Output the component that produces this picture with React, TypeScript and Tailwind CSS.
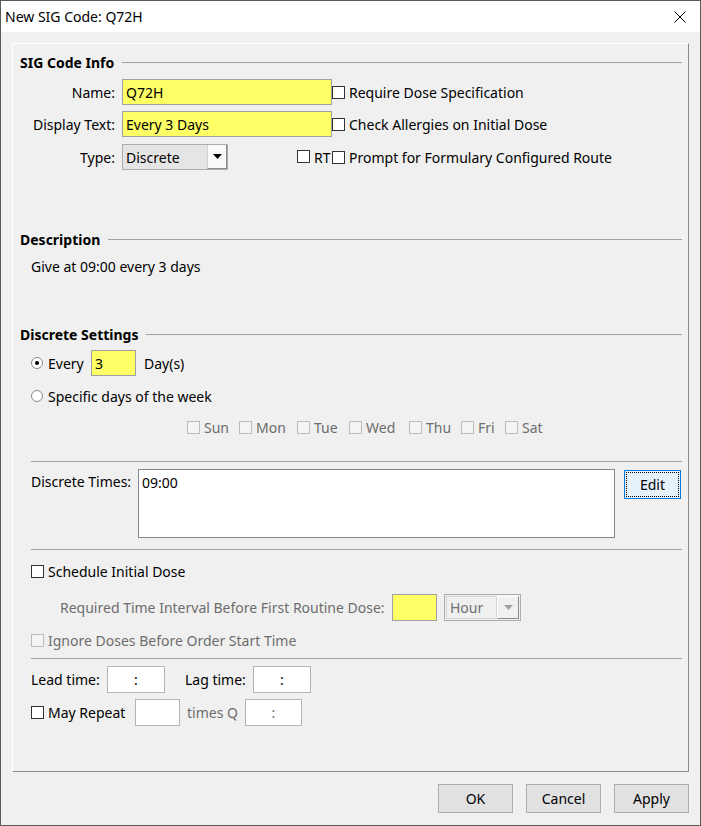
import React from "react";

function Box({ disabled }: { disabled?: boolean }) {
  return (
    <span
      className={
        disabled
          ? "inline-block w-[13px] h-[13px] shrink-0 border border-[#bcbcbc] bg-[#f4f4f4]"
          : "inline-block w-[13px] h-[13px] shrink-0 border border-[#333333] bg-white"
      }
    />
  );
}

function Radio({ checked }: { checked?: boolean }) {
  return (
    <span className="flex w-[12px] h-[12px] shrink-0 items-center justify-center rounded-full border border-[#8a8a8a] bg-white">
      {checked && <span className="block w-[4px] h-[4px] rounded-full bg-black" />}
    </span>
  );
}

function Heading({ title, className }: { title: string; className: string }) {
  return (
    <div className={"flex h-[20px] items-center " + className}>
      <span className="font-bold whitespace-nowrap">{title}</span>
      <div className="ml-[8px] h-px flex-1 bg-[#a0a0a0]" />
    </div>
  );
}

function Sep({ className }: { className: string }) {
  return <div className={"ml-[11px] h-px bg-[#a0a0a0] " + className} />;
}

function Arrow({ color }: { color: string }) {
  return (
    <svg width="9" height="5" viewBox="0 0 9 5">
      <path d="M0 0 H9 L4.5 5 Z" fill={color} />
    </svg>
  );
}

const days = [
  { d: "Sun", w: "w-[52px]" },
  { d: "Mon", w: "w-[58px]" },
  { d: "Tue", w: "w-[52px]" },
  { d: "Wed", w: "w-[60px]" },
  { d: "Thu", w: "w-[52px]" },
  { d: "Fri", w: "w-[44px]" },
  { d: "Sat", w: "w-[44px]" },
];

export default function App() {
  return (
    <div className="w-[701px] h-[826px] border border-[#5a5a5a] bg-[#f0f0f0] font-['Noto_Sans',sans-serif] text-[14px] text-black flex flex-col overflow-hidden">
      {/* title bar */}
      <div className="h-[31px] bg-white flex items-center justify-between pl-[4px] pr-[14px] shrink-0">
        <span className="text-[14px]">New SIG Code: Q72H</span>
        <svg width="12" height="12" viewBox="0 0 12 12">
          <path d="M0.5 0.5 L11.5 11.5 M11.5 0.5 L0.5 11.5" stroke="#000" strokeWidth="1" />
        </svg>
      </div>

      {/* panel */}
      <div className="ml-[11px] mt-[11px] w-[677px] h-[729px] border border-t-white border-l-white border-r-[#8c8c8c] border-b-[#8c8c8c] pl-[7px] pr-[6px] flex flex-col shrink-0">
        <Heading title="SIG Code Info" className="mt-[8px]" />

        {/* row 1 */}
        <div className="mt-[7px] h-[26px] flex items-center">
          <span className="w-[95px] text-right">Name:</span>
          <div className="ml-[7px] w-[210px] h-[26px] bg-[#ffff66] border border-[#a0a0a0] flex items-center pl-[3px]">Q72H</div>
          <Box />
          <span className="ml-[4px]">Require Dose Specification</span>
        </div>
        {/* row 2 */}
        <div className="mt-[6px] h-[26px] flex items-center">
          <span className="w-[95px] text-right">Display Text:</span>
          <div className="ml-[7px] w-[210px] h-[26px] bg-[#ffff66] border border-[#a0a0a0] flex items-center pl-[3px]">Every 3 Days</div>
          <Box />
          <span className="ml-[4px]">Check Allergies on Initial Dose</span>
        </div>
        {/* row 3 */}
        <div className="mt-[7px] h-[26px] flex items-center">
          <span className="w-[95px] text-right">Type:</span>
          <div className="ml-[7px] w-[106px] h-[26px] bg-[#e5e5e5] border border-[#adadad] flex items-stretch">
            <span className="flex-1 flex items-center pl-[3px]">Discrete</span>
            <span className="w-[20px] bg-[#fafafa] border-r border-b border-[#8a8a8a] border-l border-l-[#d0d0d0] flex items-center justify-center">
              <Arrow color="#000" />
            </span>
          </div>
          <span className="ml-[69px]"><Box /></span>
          <span className="ml-[4px] w-[18px] flex items-center">RT</span>
          <Box />
          <span className="ml-[4px]">Prompt for Formulary Configured Route</span>
        </div>

        <Heading title="Description" className="mt-[59px]" />
        <div className="mt-[7px] h-[20px] flex items-center ml-[11px]">Give at 09:00 every 3 days</div>

        <Heading title="Discrete Settings" className="mt-[48px]" />
        <div className="mt-[6px] h-[26px] flex items-center ml-[11px]">
          <Radio checked />
          <span className="ml-[5px] w-[43px]">Every</span>
          <div className="w-[45px] h-[26px] bg-[#ffff66] border border-[#a0a0a0] flex items-center pl-[3px]">3</div>
          <span className="ml-[8px]">Day(s)</span>
        </div>
        <div className="mt-[10px] h-[20px] flex items-center ml-[11px]">
          <Radio />
          <span className="ml-[5px]">Specific days of the week</span>
        </div>
        <div className="mt-[11px] h-[20px] flex items-center ml-[167px]">
          {days.map((x) => (
            <div key={x.d} className={"flex items-center " + x.w}>
              <Box disabled />
              <span className="ml-[4px] text-[#6d6d6d]">{x.d}</span>
            </div>
          ))}
        </div>

        <Sep className="mt-[24px]" />

        <div className="mt-[7px] ml-[11px] flex items-start">
          <span className="w-[107px] h-[20px] mt-[2px] flex items-center">Discrete Times:</span>
          <div className="w-[477px] h-[69px] bg-white border border-[#828790] pl-[3px] pt-[3px] leading-[20px]">09:00</div>
          <div className="ml-[9px] mt-[1px] w-[57px] h-[29px] bg-[#e5f1fb] border border-[#0078d7] p-[1px]">
            <div className="w-full h-full border border-dotted border-black flex items-center justify-center">Edit</div>
          </div>
        </div>

        <Sep className="mt-[11px]" />

        <div className="mt-[11px] h-[20px] flex items-center ml-[11px]">
          <Box />
          <span className="ml-[4px]">Schedule Initial Dose</span>
        </div>
        <div className="mt-[13px] h-[27px] flex items-center ml-[40px]">
          <span className="w-[332px] text-[#6d6d6d] whitespace-nowrap">Required Time Interval Before First Routine Dose:</span>
          <div className="w-[45px] h-[27px] bg-[#ffff66] border border-[#a0a0a0]" />
          <div className="ml-[7px] w-[77px] h-[27px] border border-[#adadad] bg-[#f0f0f0] flex items-stretch p-[1px]">
            <span className="flex-1 flex items-center pl-[3px] text-[#6d6d6d] border border-[#d6d6d6]">Hour</span>
            <span className="w-[22px] bg-[#f0f0f0] border border-t-white border-l-white border-r-[#8a8a8a] border-b-[#8a8a8a] flex items-center justify-center">
              <Arrow color="#a0a0a0" />
            </span>
          </div>
        </div>
        <div className="mt-[9px] h-[20px] flex items-center ml-[11px]">
          <Box disabled />
          <span className="ml-[4px] text-[#6d6d6d]">Ignore Doses Before Order Start Time</span>
        </div>

        <Sep className="mt-[8px]" />

        <div className="mt-[7px] h-[27px] flex items-center ml-[11px]">
          <span className="w-[76px]">Lead time:</span>
          <div className="w-[58px] h-[27px] bg-white border border-[#b4b4b4] flex items-center justify-center">:</div>
          <span className="ml-[20px] w-[68px]">Lag time:</span>
          <div className="w-[58px] h-[27px] bg-white border border-[#b4b4b4] flex items-center justify-center">:</div>
        </div>
        <div className="mt-[6px] h-[27px] flex items-center ml-[11px]">
          <Box />
          <span className="ml-[4px] w-[87px]">May Repeat</span>
          <div className="w-[45px] h-[27px] bg-white border border-[#b4b4b4]" />
          <span className="ml-[7px] w-[58px] text-[#6d6d6d]">times Q</span>
          <div className="w-[57px] h-[27px] bg-white border border-[#b4b4b4] flex items-center justify-center text-[#6d6d6d]">:</div>
        </div>
      </div>

      {/* buttons */}
      <div className="mt-[12px] flex justify-end gap-[13px] pr-[11px]">
        <div className="w-[75px] h-[29px] bg-[#e1e1e1] border border-[#adadad] flex items-center justify-center">OK</div>
        <div className="w-[75px] h-[29px] bg-[#e1e1e1] border border-[#adadad] flex items-center justify-center">Cancel</div>
        <div className="w-[75px] h-[29px] bg-[#e1e1e1] border border-[#adadad] flex items-center justify-center">Apply</div>
      </div>
    </div>
  );
}
